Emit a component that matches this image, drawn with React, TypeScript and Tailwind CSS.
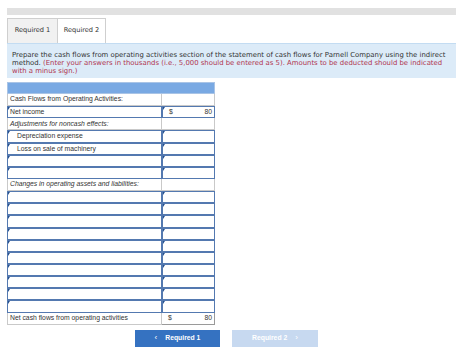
import React from "react";

const DARK = "border-[#5479b0]";

function Flag() {
  return (
    <span className="absolute left-0 top-0 h-0 w-0 border-t-[3px] border-r-[2px] border-t-[#24508f] border-r-transparent" />
  );
}

function LabelRow({ text, italic, indent }: { text: string; italic?: boolean; indent?: boolean }) {
  return (
    <div className="flex h-[12.15px]">
      <div
        className={`w-[155px] border-b border-l border-r border-[#c9c9c9] flex items-center ${indent ? "pl-[9px]" : "pl-[2px]"} ${italic ? "italic" : ""}`}
      >
        {text}
      </div>
      <div className="w-[53px] border-b border-r border-[#c9c9c9]" />
    </div>
  );
}

function InputRow({ text, indent, value }: { text?: string; indent?: boolean; value?: string }) {
  return (
    <div className="flex h-[12.15px]">
      <div className={`relative w-[155px] border ${DARK} flex items-center ${indent ? "pl-[9px]" : "pl-[2px]"}`}>
        <Flag />
        {text}
      </div>
      <div className={`relative w-[53px] border ${DARK} flex items-center justify-between pl-[6px] pr-[2px]`}>
        <Flag />
        {value ? (
          <>
            <span>$</span>
            <span>{value}</span>
          </>
        ) : null}
      </div>
    </div>
  );
}

export default function App() {
  return (
    <div className="w-[474px] h-[348px] bg-white overflow-hidden">
      <div className="ml-[7px] w-[449px] pt-[8px]">
        <div className="h-[7px] bg-[#e1e1e1]" />
        <div className="mt-[3px] flex h-[25px] text-[6.6px] text-[#333] font-['DejaVu_Sans',sans-serif]">
          <div className="w-[51px] border border-b-0 border-[#cfcfcf] bg-[#f1f1f1] flex items-center justify-center">
            Required 1
          </div>
          <div className="w-[48px] border border-l-0 border-b-0 border-[#cfcfcf] bg-white flex items-center justify-center">
            Required 2
          </div>
        </div>
        <div className="h-[35px] border-t border-[#c3dcf2] bg-[#dcebf8] pl-[5px] pr-[4px] pt-[7px] text-[6.9px] leading-[8px] font-['DejaVu_Sans',sans-serif] text-[#333]">
          Prepare the cash flows from operating activities section of the statement of cash flows for Parnell Company using the indirect
          method.{" "}
          <span className="text-[#b0354f]">
            (Enter your answers in thousands (i.e., 5,000 should be entered as 5). Amounts to be deducted should be indicated with a minus sign.)
          </span>
        </div>

        <div className="mt-[4px] w-[208px] text-[6.8px] text-[#333] font-['Liberation_Sans',Arial,sans-serif]">
          <div className="h-[12px] bg-[#79a9e3] border border-[#a9c4e6]" />
          <LabelRow text="Cash Flows from Operating Activities:" />
          <InputRow text="Net income" value="80" />
          <LabelRow text="Adjustments for noncash effects:" italic />
          <InputRow text="Depreciation expense" indent />
          <InputRow text="Loss on sale of machinery" indent />
          <InputRow />
          <InputRow />
          <LabelRow text="Changes in operating assets and liabilities:" italic />
          {Array.from({ length: 10 }).map((_, i) => (
            <InputRow key={i} />
          ))}
          <div className="flex h-[12.15px]">
            <div className="w-[155px] border-b border-l border-r border-[#c9c9c9] flex items-center pl-[2px]">
              Net cash flows from operating activities
            </div>
            <div className="w-[53px] border-b border-r border-[#9a9a9a] flex items-center justify-between pl-[6px] pr-[2px]">
              <span>$</span>
              <span>80</span>
            </div>
          </div>
        </div>

        <div className="mt-[5px] ml-[128px] flex gap-[12px] text-[6.8px] font-bold text-white font-['Liberation_Sans',Arial,sans-serif]">
          <div className="w-[85px] h-[17px] bg-[#3572c1] flex items-center justify-center gap-[8px]">
            <span className="text-[8px] font-normal">‹</span>
            <span>Required 1</span>
          </div>
          <div className="w-[86px] h-[17px] bg-[#c7d9f0] flex items-center justify-center gap-[8px]">
            <span>Required 2</span>
            <span className="text-[8px] font-normal">›</span>
          </div>
        </div>
      </div>
    </div>
  );
}
